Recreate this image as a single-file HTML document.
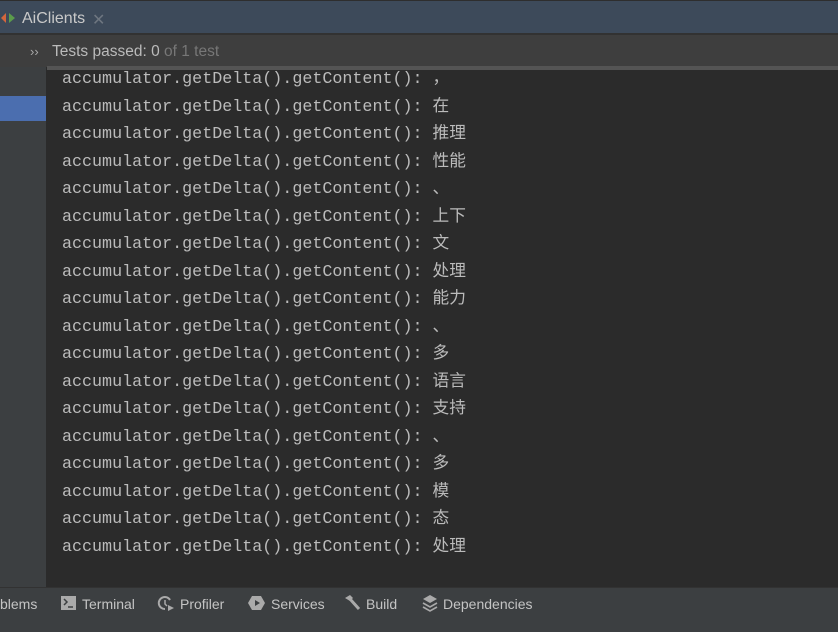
<!DOCTYPE html>
<html><head><meta charset="utf-8"><style>
body{margin:0;width:838px;height:632px;overflow:hidden;background:#2b2b2b;position:relative;font-family:"Liberation Sans","Noto Sans CJK SC",sans-serif}
.abs{position:absolute}
#tab{left:0;top:0;width:838px;height:35px;background:#3d4a5a;border-top:1px solid #2e2e2e;border-bottom:2px solid #323232;box-sizing:border-box}
#tb{left:0;top:35px;width:838px;height:32px;background:#3e3e3e}
#sep{left:47px;top:66px;width:791px;height:4px;background:#545454}
#lp{left:0;top:67px;width:46px;height:520px;background:#3c3f41}
#sel{left:0;top:96px;width:46px;height:25px;background:#4b6eaf}
#con{left:62px;top:66px;font-family:"Liberation Mono","Noto Sans CJK SC",monospace;font-size:16.7px;color:#bbbbbb;line-height:27.5px;white-space:pre}
#bb{left:0;top:587px;width:838px;height:45px;background:#3c3f41;border-top:1px solid #323232;box-sizing:border-box}
#bb span{position:absolute;top:8px;font-size:14px;color:#c4c4c4}
</style></head><body>
<div id="tab" class="abs">
<svg class="abs" style="left:0;top:11px" width="16" height="12"><path d="M6 1 L1 6 L6 11Z" fill="#d4663c"/><path d="M9 1 L15 6 L9 11Z" fill="#5b9c4b"/></svg>
<span class="abs" style="left:22px;top:9px;font-size:16px;color:#c9c9c9">AiClients</span>
<span class="abs" style="left:92px;top:9px;font-size:16px;color:#6e7680">✕</span>
</div>
<div id="tb" class="abs">
<span class="abs" style="left:30px;top:9px;font-size:13px;color:#aaa">››</span>
<span class="abs" style="left:52px;top:8px;font-size:15.5px;color:#bbb">Tests passed: 0 <span style="color:#777">of 1 test</span></span>
</div>
<div id="sep" class="abs"></div>
<div id="lp" class="abs"></div>
<div id="sel" class="abs"></div>
<div id="con" class="abs">accumulator.getDelta().getContent(): ，
accumulator.getDelta().getContent(): 在
accumulator.getDelta().getContent(): 推理
accumulator.getDelta().getContent(): 性能
accumulator.getDelta().getContent(): 、
accumulator.getDelta().getContent(): 上下
accumulator.getDelta().getContent(): 文
accumulator.getDelta().getContent(): 处理
accumulator.getDelta().getContent(): 能力
accumulator.getDelta().getContent(): 、
accumulator.getDelta().getContent(): 多
accumulator.getDelta().getContent(): 语言
accumulator.getDelta().getContent(): 支持
accumulator.getDelta().getContent(): 、
accumulator.getDelta().getContent(): 多
accumulator.getDelta().getContent(): 模
accumulator.getDelta().getContent(): 态
accumulator.getDelta().getContent(): 处理</div>
<div id="bb" class="abs">
<span style="left:0">blems</span>
<svg class="abs" style="left:61px;top:8px" width="15" height="14"><rect x="0" y="0" width="15" height="14" fill="#aaa"/><path d="M3 3 L6 6 L3 9 M7 11 H12" stroke="#3c3f41" stroke-width="1.5" fill="none"/></svg>
<span style="left:82px">Terminal</span>
<svg class="abs" style="left:157px;top:7px" width="17" height="17"><path d="M13 5 A6 6 0 1 0 8 14" stroke="#aaa" stroke-width="2" fill="none"/><path d="M8 5 V9 L10 11" stroke="#aaa" stroke-width="1.5" fill="none"/><path d="M11 10 L17 13 L11 16Z" fill="#aaa"/></svg>
<span style="left:180px">Profiler</span>
<svg class="abs" style="left:248px;top:7px" width="17" height="16"><path d="M4 1 H13 L17 8 L13 15 H4 L0 8Z" fill="#aaa"/><path d="M7 5 L12 8 L7 11Z" fill="#3c3f41"/></svg>
<span style="left:271px">Services</span>
<svg class="abs" style="left:343px;top:7px" width="18" height="16"><path d="M2 3 L7 0 L10 3 L7 6Z" fill="#aaa"/><path d="M7 4 L16 14" stroke="#aaa" stroke-width="3"/></svg>
<span style="left:366px">Build</span>
<svg class="abs" style="left:422px;top:6px" width="16" height="18"><path d="M8 1 L15 5 L8 9 L1 5Z" fill="#aaa"/><path d="M1 9 L8 13 L15 9 M1 13 L8 17 L15 13" stroke="#aaa" stroke-width="1.6" fill="none"/></svg>
<span style="left:443px">Dependencies</span>
</div>
</body></html>
